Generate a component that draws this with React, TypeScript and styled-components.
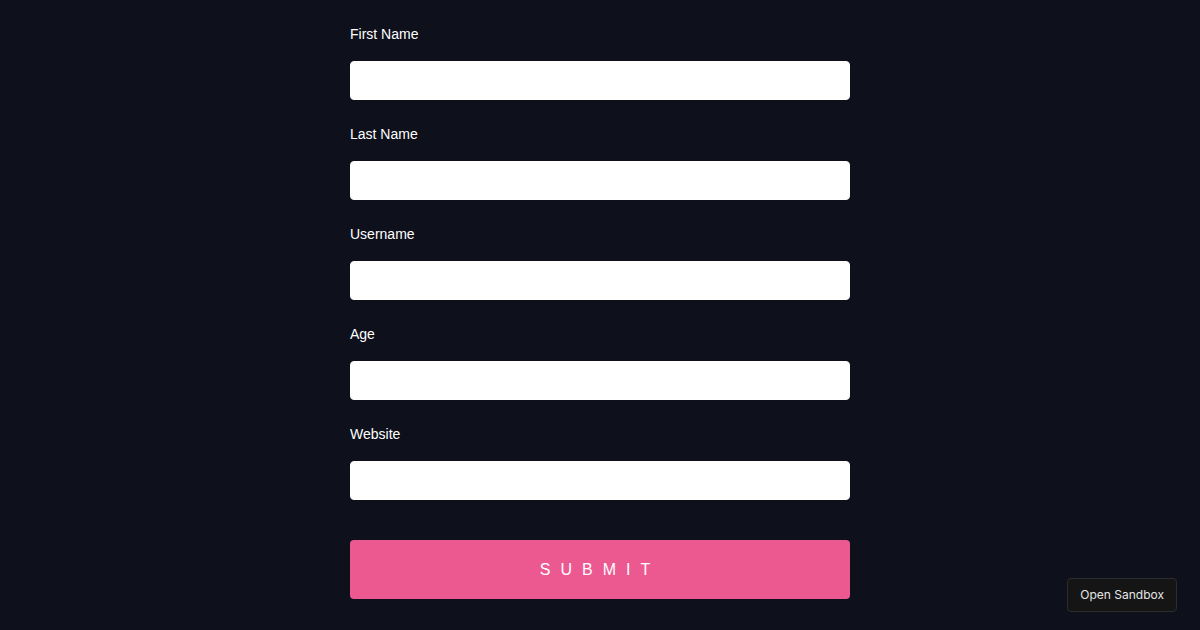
import { Fragment } from "react";
import styled, { createGlobalStyle } from "styled-components";

const GlobalStyle = createGlobalStyle`
  html, body {
    margin: 0;
    padding: 0;
    background: #0e101c;
    font-family: "Liberation Sans", Arial, sans-serif;
  }
`;

const Form = styled.form`
  max-width: 500px;
  margin: 0 auto;
  padding-top: 20px;
`;

const Label = styled.label`
  display: block;
  line-height: 2;
  text-align: left;
  margin-top: 20px;
  margin-bottom: 13px;
  color: white;
  font-size: 14px;
  font-weight: 200;

  &:first-child {
    margin-top: 0;
  }
`;

const Input = styled.input`
  display: block;
  box-sizing: border-box;
  width: 100%;
  height: 39px;
  border-radius: 4px;
  border: 1px solid white;
  background: white;
  padding: 10px 15px;
  margin: 0 0 10px;
  font-size: 14px;
  font-family: inherit;
`;

const SubmitButton = styled.button`
  display: block;
  width: 100%;
  background: #ec5990;
  color: white;
  text-transform: uppercase;
  border: none;
  border-radius: 4px;
  margin-top: 40px;
  padding: 20px;
  font-size: 16px;
  font-weight: 100;
  letter-spacing: 10px;
  font-family: inherit;
  line-height: 19px;
`;

const SandboxButton = styled.a`
  position: fixed;
  right: 23px;
  bottom: 18px;
  padding: 8px 12px;
  background: #151515;
  border: 1px solid #2c2c2c;
  border-radius: 4px;
  color: #e6e6e6;
  font-family: Inter, "Noto Sans", sans-serif;
  font-size: 12px;
  line-height: 16px;
  text-decoration: none;
`;

const fields = [
  { name: "firstName", label: "First Name" },
  { name: "lastName", label: "Last Name" },
  { name: "username", label: "Username" },
  { name: "age", label: "Age" },
  { name: "website", label: "Website" },
];

export default function App() {
  return (
    <>
      <GlobalStyle />
      <Form onSubmit={(e) => e.preventDefault()}>
        {fields.map((f) => (
          <Fragment key={f.name}>
            <Label htmlFor={f.name}>{f.label}</Label>
            <Input id={f.name} name={f.name} />
          </Fragment>
        ))}
        <SubmitButton type="submit">Submit</SubmitButton>
      </Form>
      <SandboxButton href="#">Open Sandbox</SandboxButton>
    </>
  );
}
